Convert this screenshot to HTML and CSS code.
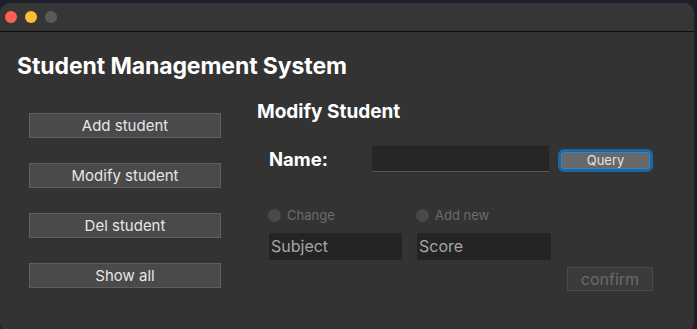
FILE: index.html
```html
<!DOCTYPE html>
<html lang="en">
<head>
  <meta charset="UTF-8">
  <meta name="viewport" content="width=device-width, initial-scale=1.0">
  <title>Student Management System</title>
  <link rel="stylesheet" href="styles.css">
</head>
<body>

  <div class="window">
    <!-- Title bar -->
    <div class="titlebar">
      <span class="light red"></span>
      <span class="light yellow"></span>
      <span class="light grey"></span>
    </div>

    <div class="content">
      <h1>Student Management System</h1>

      <div class="main">
        <div class="sidebar">
          <button class="side-btn">Add student</button>
          <button class="side-btn">Modify student</button>
          <button class="side-btn">Del student</button>
          <button class="side-btn">Show all</button>
        </div>

        <div class="panel">
          <h2>Modify Student</h2>

          <div class="name-row">
            <label class="name-label">Name:</label>
            <input class="name-input" type="text">
            <button class="query-btn">Query</button>
          </div>

          <div class="edit-grid">
            <label class="radio"><span class="dot"></span>Change</label>
            <label class="radio"><span class="dot"></span>Add new</label>
            <div class="field">Subject</div>
            <div class="field">Score</div>
          </div>

          <div class="confirm-row">
            <button class="confirm-btn">confirm</button>
          </div>
        </div>
      </div>
    </div>
  </div>

</body>
</html>
```

FILE: styles.css
```css
body {
  margin: 0;
  background: #1d1f2a;
  font-family: Inter, 'Noto Sans', sans-serif;
  overflow: hidden;
}

.window {
  margin-top: 3px;
  width: 694px;
  height: 330px;
  background: #333333;
  border-radius: 10px;
  overflow: hidden;
}

.titlebar {
  height: 28px;
  background: #363636;
  border-bottom: 1px solid #0e0e0e;
  display: flex;
  align-items: center;
  gap: 8px;
  padding-left: 5px;
}

.light {
  width: 12px;
  height: 12px;
  border-radius: 50%;
}

.light.red { background: #fe5f57; }
.light.yellow { background: #febc2e; }
.light.grey { background: #5a5a5a; }

.content {
  padding: 20px 0 0 17px;
}

h1 {
  margin: 0;
  color: #ffffff;
  font-size: 23px;
  font-weight: 700;
  line-height: 28px;
  letter-spacing: -0.1px;
}

.main {
  display: flex;
}

.sidebar {
  width: 192px;
  margin: 33px 0 0 12px;
  display: flex;
  flex-direction: column;
  gap: 25px;
}

.side-btn {
  height: 25px;
  padding: 0;
  background: #4a4a4a;
  border: 1px solid #5f5f5f;
  color: #e6e6e6;
  font-family: inherit;
  font-size: 15px;
}

.panel {
  width: 396px;
  margin-left: 36px;
  padding-top: 20px;
}

h2 {
  margin: 0;
  color: #ffffff;
  font-size: 19px;
  font-weight: 700;
  line-height: 24px;
}

.name-row {
  display: flex;
  align-items: center;
  margin: 21px 0 0 12px;
}

.name-label {
  width: 103px;
  color: #ffffff;
  font-size: 18.5px;
  font-weight: 700;
}

.name-input {
  width: 177px;
  height: 27px;
  box-sizing: border-box;
  background: #262626;
  border: none;
  border-top: 1px solid #2e2e2e;
  border-bottom: 1px solid #565656;
  outline: none;
}

.query-btn {
  width: 95px;
  height: 23px;
  margin: 3px 0 0 9px;
  padding: 0;
  background: #686868;
  border: 3px solid #1b68a6;
  border-radius: 6px;
  box-shadow: inset 0 0 0 1px #3b82bd;
  color: #e2e2e2;
  font-family: inherit;
  font-size: 13px;
}

.edit-grid {
  display: grid;
  grid-template-columns: 133px 134px;
  column-gap: 15px;
  row-gap: 11px;
  margin: 36px 0 0 12px;
}

.radio {
  display: flex;
  align-items: center;
  gap: 6px;
  color: #6c6c6c;
  font-size: 13px;
  line-height: 14px;
  margin-left: -1px;
}

.dot {
  width: 13px;
  height: 13px;
  border-radius: 50%;
  background: #494949;
}

.field {
  height: 27px;
  background: #242424;
  color: #a6a6a6;
  font-size: 16px;
  line-height: 27px;
  padding-left: 2px;
}

.confirm-row {
  display: flex;
  justify-content: flex-end;
  margin-top: 7px;
}

.confirm-btn {
  width: 86px;
  height: 24px;
  padding: 0;
  background: #3b3b3b;
  border: 1px solid #4b4b4b;
  color: #6a6a6a;
  font-family: inherit;
  font-size: 16px;
}
```
